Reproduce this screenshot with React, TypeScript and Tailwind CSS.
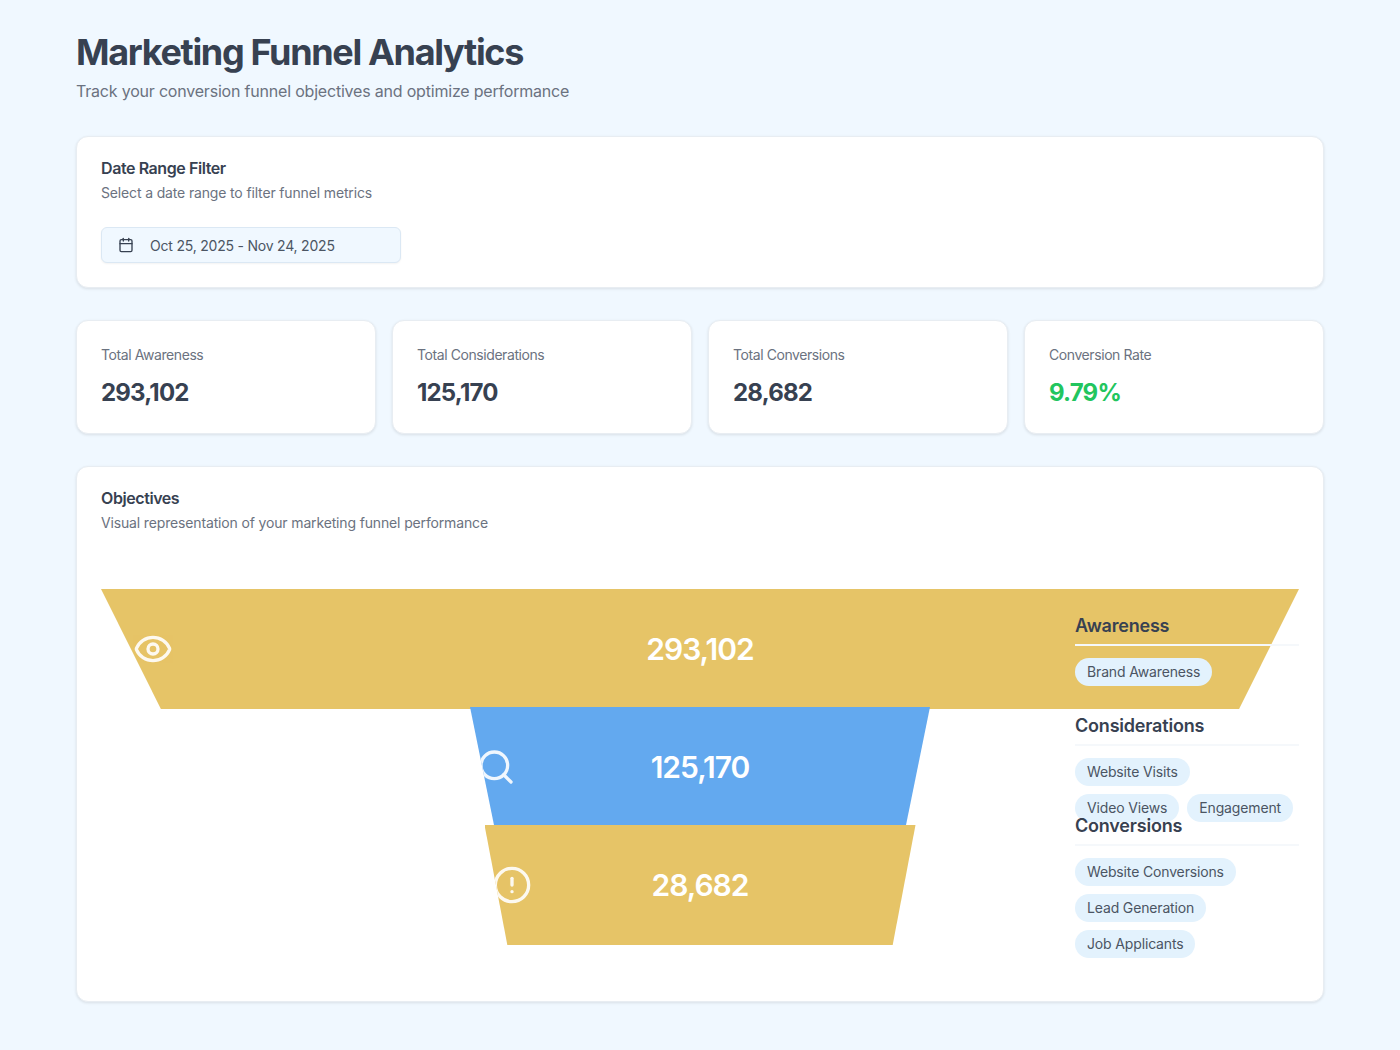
import { Calendar, CircleAlert, Eye, Search } from 'lucide-react'
import type { ReactNode } from 'react'

const stats = [
  { label: 'Total Awareness', value: '293,102', tone: 'text-[#374151]' },
  { label: 'Total Considerations', value: '125,170', tone: 'text-[#374151]' },
  { label: 'Total Conversions', value: '28,682', tone: 'text-[#374151]' },
  { label: 'Conversion Rate', value: '9.79%', tone: 'text-[#22c55e]' },
]

const objectives = [
  { title: 'Awareness', items: ['Brand Awareness'] },
  { title: 'Considerations', items: ['Website Visits', 'Video Views', 'Engagement'] },
  { title: 'Conversions', items: ['Website Conversions', 'Lead Generation', 'Job Applicants'] },
]

function Card({ className, children }: { className: string; children: ReactNode }) {
  return (
    <div className={`rounded-xl border border-[#e8edf2] bg-white px-6 shadow-[0_1px_3px_rgba(0,0,0,0.1)] ${className}`}>
      {children}
    </div>
  )
}

function CardTitle({ title, description }: { title: string; description: string }) {
  return (
    <>
      <h2 className="text-[16px] leading-[24px] font-semibold tracking-[-0.42px] text-[#374151]">{title}</h2>
      <p className="mt-[1px] text-[14px] leading-[24px] tracking-[-0.15px] text-[#6b7280]">{description}</p>
    </>
  )
}

function FunnelStage({ className, value, icon }: { className: string; value: string; icon: ReactNode }) {
  return (
    <div className={`grid h-[120px] grid-cols-[1fr_auto_1fr] items-center ${className}`}>
      {icon}
      <span className="text-[30px] font-semibold tracking-[-1px] text-white">{value}</span>
    </div>
  )
}

export default function App() {
  return (
    <div className="min-h-[1050px] bg-[#f0f8ff] px-[76px] pt-[28px] font-['Inter',sans-serif]">
      <h1 className="text-[36px] leading-[48px] font-bold tracking-[-1.33px] text-[#374151]">Marketing Funnel Analytics</h1>
      <p className="mt-[3px] text-[16px] leading-[24px] tracking-[-0.2px] text-[#6b7280]">
        Track your conversion funnel objectives and optimize performance
      </p>

      <Card className="mt-[33px] h-[152px] pt-[19px]">
        <CardTitle title="Date Range Filter" description="Select a date range to filter funnel metrics" />
        <div className="mt-[22px] flex h-[36px] w-[300px] items-center gap-[16px] rounded-md border border-[#dbe8f4] bg-[#f0f8ff] px-[16px] text-[14px] tracking-[-0.21px] text-[#4b5563] shadow-[0_1px_2px_rgba(0,0,0,0.05)]">
          <Calendar className="h-4 w-4 text-[#374151]" />
          <span>Oct 25, 2025 - Nov 24, 2025</span>
        </div>
      </Card>

      <div className="mt-[32px] grid grid-cols-4 gap-[16px]">
        {stats.map((s) => (
          <Card key={s.label} className="h-[114px] pt-[24px]">
            <div className="text-[14px] leading-[20px] tracking-[-0.42px] text-[#6b7280]">{s.label}</div>
            <div className={`mt-[12px] text-[24px] leading-[32px] font-bold tracking-[-0.8px] ${s.tone}`}>{s.value}</div>
          </Card>
        ))}
      </div>

      <Card className="relative mt-[32px] h-[536px] pt-[19px]">
        <CardTitle title="Objectives" description="Visual representation of your marketing funnel performance" />
        <div className="relative mt-[54px]">
          <div className="flex flex-col items-center">
            <FunnelStage
              className="w-full bg-[#e6c467] [clip-path:polygon(0_0,100%_0,95%_100%,5%_100%)]"
              value="293,102"
              icon={<div className="pl-[32px]"><Eye className="h-10 w-10 text-white opacity-90" /></div>}
            />
            <FunnelStage
              className="-mt-[2px] w-[460px] bg-[#63a9ef] [clip-path:polygon(0_0,100%_0,94.7%_100%,5.3%_100%)]"
              value="125,170"
              icon={<div className="pl-[6px]"><Search className="h-10 w-10 text-white opacity-90" /></div>}
            />
            <FunnelStage
              className="-mt-[2px] w-[431px] bg-[#e6c467] [clip-path:polygon(0_0,100%_0,94.7%_100%,5.3%_100%)]"
              value="28,682"
              icon={<div className="pl-[7px]"><CircleAlert className="h-10 w-10 text-white opacity-90" /></div>}
            />
          </div>

          {/* legend sits on top of the funnel's right side */}
          <div className="absolute top-[25px] right-0 w-[224px]">
            {objectives.map((o) => (
              <div key={o.title} className="h-[100px]">
                <h3 className="border-b-2 border-[#f5f8fb] pb-[6px] text-[18px] leading-[24px] font-semibold tracking-[-0.2px] text-[#374151]">
                  {o.title}
                </h3>
                <div className="mt-[12px] flex flex-wrap gap-[8px]">
                  {o.items.map((item) => (
                    <span key={item} className="h-[28px] rounded-full bg-[#e3f2fd] px-[12px] text-[14px] leading-[28px] tracking-[-0.15px] text-[#4b5563]">
                      {item}
                    </span>
                  ))}
                </div>
              </div>
            ))}
          </div>
        </div>
      </Card>
    </div>
  )
}
